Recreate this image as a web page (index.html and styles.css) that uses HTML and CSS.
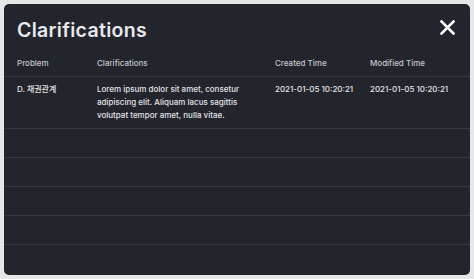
FILE: index.html
```html
<!DOCTYPE html>
<html>
<head>
<meta charset="utf-8">
<link rel="stylesheet" href="styles.css">
</head>
<body>
<div class="modal">
  <div class="head">
    <h1 class="title">Clarifications</h1>
    <button class="close" aria-label="Close">
      <svg width="15" height="15" viewBox="0 0 15 15"><path d="M1.5 1.5L13.5 13.5M13.5 1.5L1.5 13.5" stroke="#fff" stroke-width="2.6" stroke-linecap="square"/></svg>
    </button>
  </div>
  <table class="grid">
    <thead>
      <tr><th class="c1">Problem</th><th class="c2">Clarifications</th><th class="c3">Created Time</th><th class="c4">Modified Time</th></tr>
    </thead>
    <tbody>
      <tr class="data"><td>D. 채권관계</td><td>Lorem ipsum dolor sit amet, consetur adipiscing elit. Aliquam lacus sagittis volutpat tempor amet, nulla vitae.</td><td>2021-01-05 10:20:21</td><td>2021-01-05 10:20:21</td></tr>
      <tr class="empty"><td></td><td></td><td></td><td></td></tr>
      <tr class="empty"><td></td><td></td><td></td><td></td></tr>
      <tr class="empty"><td></td><td></td><td></td><td></td></tr>
      <tr class="empty"><td></td><td></td><td></td><td></td></tr>
      <tr class="empty last"><td></td><td></td><td></td><td></td></tr>
    </tbody>
  </table>
</div>
</body>
</html>
```
FILE: styles.css
```css
html, body { margin: 0; padding: 0; }
body {
  background: #e6e7e9;
  width: 474px;
  height: 279px;
  padding: 4px 4px 4px 4px;
  box-sizing: border-box;
  font-family: Inter, "Noto Sans CJK KR", sans-serif;
}
.modal {
  background: #22252c;
  border-radius: 5px;
  height: 271px;
  width: 466px;
  overflow: hidden;
  box-sizing: border-box;
}
.head {
  display: flex;
  justify-content: space-between;
  align-items: flex-start;
  padding: 11px 15px 0 13px;
  height: 46px;
  box-sizing: border-box;
}
.title {
  margin: 0;
  color: #e8e9ec;
  font-size: 19.5px;
  font-weight: 600;
  line-height: 30px;
  letter-spacing: 0.3px;
}
.close {
  background: none;
  border: 0;
  padding: 0;
  margin-top: 5px;
  width: 15px;
  height: 15px;
  display: block;
}
.close svg { display: block; }
.grid {
  width: 100%;
  border-collapse: collapse;
  table-layout: fixed;
}
.grid th, .grid td {
  text-align: left;
  vertical-align: top;
  padding: 0;
}
.grid th {
  color: #c4c7cc;
  font-size: 8px;
  font-weight: 500;
  height: 26px;
  vertical-align: middle;
  border-bottom: 1px solid #363941;
}
.c1 { width: 80px; padding-left: 13px !important; }
.c2 { width: 178px; }
.c3 { width: 95px; }
.grid td:first-child { padding-left: 13px; }
.data td {
  color: #e2e3e6;
  font-size: 8px;
  font-weight: 500;
  line-height: 13px;
  padding-top: 6px;
  padding-bottom: 6px;
  height: 37px;
  border-bottom: 1px solid #363941;
}
.data td:nth-child(2) { padding-right: 18px; }
.empty td {
  height: 28px;
  border-bottom: 1px solid #363941;
}
.empty.last td { border-bottom: 0; }
```
